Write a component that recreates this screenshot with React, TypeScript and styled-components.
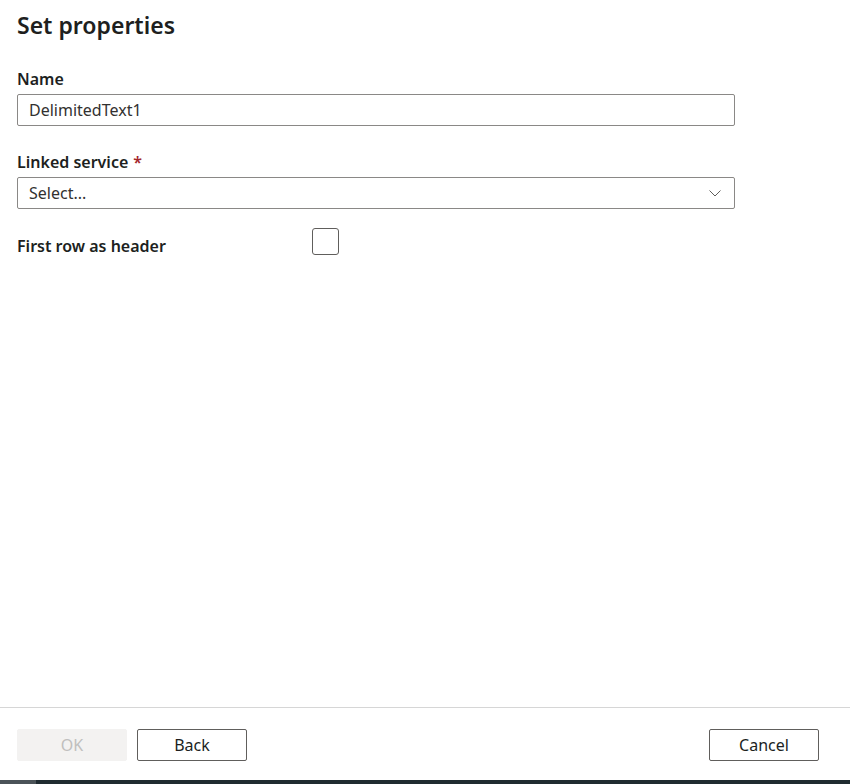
import React from "react";
import styled, { createGlobalStyle } from "styled-components";

const Global = createGlobalStyle`
  html, body { margin: 0; padding: 0; background: #ffffff; }
  body { font-family: "Noto Sans", "Open Sans", "Liberation Sans", sans-serif; color: #201f1e; }
  * { box-sizing: border-box; }
`;

const Page = styled.div`
  height: 784px;
  display: flex;
  flex-direction: column;
  background: #fff;
`;

const Content = styled.div`
  flex: 1;
  padding: 6px 115px 0 17px;
  display: flex;
  flex-direction: column;
`;

const Title = styled.h1`
  margin: 0 0 24px 0;
  font-size: 23px;
  font-weight: 600;
  line-height: 38px;
  color: #201f1e;
`;

const Field = styled.div<{ $top?: number }>`
  display: flex;
  flex-direction: column;
  margin-top: ${(p) => p.$top ?? 0}px;
`;

const Label = styled.label`
  font-size: 16px;
  font-weight: 600;
  line-height: 22px;
  margin-bottom: 4px;
  color: #201f1e;
`;

const Required = styled.span`
  color: #a4262c;
  margin-left: 5px;
`;

const TextInput = styled.input`
  height: 32px;
  width: 100%;
  border: 1px solid #8a8886;
  border-radius: 2px;
  padding: 0 11px;
  font-family: inherit;
  font-size: 16px;
  color: #323130;
  outline: none;
  background: #fff;
`;

const SelectBox = styled.div`
  height: 32px;
  width: 100%;
  border: 1px solid #8a8886;
  border-radius: 2px;
  padding: 0 13px 0 11px;
  display: flex;
  align-items: center;
  justify-content: space-between;
  font-size: 16px;
  color: #323130;
`;

const CheckRow = styled.div`
  display: flex;
  align-items: flex-start;
  margin-top: 19px;
`;

const CheckLabel = styled.span`
  font-size: 16px;
  font-weight: 600;
  line-height: 22px;
  width: 295px;
  padding-top: 7px;
`;

const CheckBox = styled.span`
  width: 27px;
  height: 27px;
  border: 1px solid #605e5c;
  border-radius: 3px;
  display: inline-block;
`;

const Footer = styled.div`
  border-top: 1px solid #d6d6d6;
  padding: 21px 31px 19px 17px;
  display: flex;
  align-items: center;
  gap: 10px;
`;

const Spacer = styled.div`
  flex: 1;
`;

const Button = styled.button<{ $disabled?: boolean }>`
  width: 110px;
  height: 32px;
  border-radius: 2px;
  font-family: inherit;
  font-size: 16px;
  padding: 0;
  border: ${(p) => (p.$disabled ? "1px solid #f3f2f1" : "1px solid #605e5c")};
  background: ${(p) => (p.$disabled ? "#f3f2f1" : "#ffffff")};
  color: ${(p) => (p.$disabled ? "#c0bfbe" : "#201f1e")};
`;

const TaskBar = styled.div`
  height: 4px;
  display: flex;
  background: #1f2b30;
`;

const TaskStart = styled.div`
  width: 36px;
  background: #4b5358;
`;

const Chevron = () => (
  <svg width="12" height="7" viewBox="0 0 12 7" fill="none">
    <path d="M0.5 0.5 L6 6 L11.5 0.5" stroke="#605e5c" strokeWidth="1" />
  </svg>
);

export default function App() {
  return (
    <>
      <Global />
      <Page>
        <Content>
          <Title>Set properties</Title>
          <Field>
            <Label>Name</Label>
            <TextInput defaultValue="DelimitedText1" />
          </Field>
          <Field $top={25}>
            <Label>
              Linked service<Required>*</Required>
            </Label>
            <SelectBox>
              <span>Select...</span>
              <Chevron />
            </SelectBox>
          </Field>
          <CheckRow>
            <CheckLabel>First row as header</CheckLabel>
            <CheckBox />
          </CheckRow>
        </Content>
        <Footer>
          <Button $disabled>OK</Button>
          <Button>Back</Button>
          <Spacer />
          <Button>Cancel</Button>
        </Footer>
        <TaskBar>
          <TaskStart />
        </TaskBar>
      </Page>
    </>
  );
}
